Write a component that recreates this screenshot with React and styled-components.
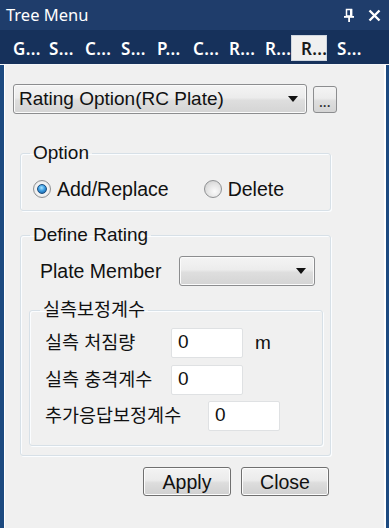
import React from 'react';
import styled, { createGlobalStyle } from 'styled-components';

const Global = createGlobalStyle`
  html, body { margin: 0; padding: 0; background: #f0f0f0; }
  #root { width: 389px; height: 528px; }
`;

const Window = styled.div`
  width: 389px;
  height: 528px;
  display: flex;
  flex-direction: column;
  overflow: hidden;
  font-family: "Liberation Sans", "Noto Sans CJK KR", sans-serif;
  color: #111;
`;

const TitleBar = styled.div`
  height: 30px;
  flex: none;
  background: #1f3d6b;
  display: flex;
  align-items: center;
  padding: 0 8px 0 6px;
  color: #fff;
`;

const Title = styled.div`
  flex: 1;
  font-family: "Noto Sans", sans-serif;
  font-size: 16.5px;
  line-height: 20px;
`;

const TitleIcons = styled.div`
  display: flex;
  align-items: center;
  gap: 13px;
`;

const TabBar = styled.div`
  height: 35px;
  flex: none;
  box-sizing: border-box;
  background: #16315b;
  display: flex;
  align-items: flex-end;
  padding: 0 0 3px 3px;
  border-bottom: 1px solid #f4f6f9;
`;

const Tab = styled.div`
  width: 36px;
  height: 26px;
  box-sizing: border-box;
  padding-left: 9px;
  display: flex;
  align-items: center;
  font-family: "Noto Sans", sans-serif;
  font-weight: 600;
  font-size: 17px;
  letter-spacing: 0.3px;
  white-space: nowrap;
  color: ${p => (p.$active ? '#1a1a1a' : '#ffffff')};
  background: ${p => (p.$active ? '#f0f0f0' : 'transparent')};
  border: 1px solid ${p => (p.$active ? '#cfd6df' : 'transparent')};
`;

const Content = styled.div`
  flex: 1;
  background: #f0f0f0;
  border-left: 4px solid #1d4a80;
  border-right: 3px solid #1d4a80;
  box-shadow: inset 1px 0 0 #ffffff, inset -2px 0 0 #ffffff;
  padding: 19px 0 0 9px;
  box-sizing: border-box;
`;

const ComboRow = styled.div`
  display: flex;
  align-items: center;
  gap: 6px;
`;

const Combo = styled.div`
  width: ${p => p.$w}px;
  height: 30px;
  box-sizing: border-box;
  border: 1px solid #8c8d8f;
  border-radius: 3px;
  background: linear-gradient(#f4f4f4 0%, #ececec 45%, #dedede 55%, #d4d4d4 100%);
  box-shadow: inset 0 0 0 1px #fbfbfb;
  display: flex;
  align-items: center;
  padding: 0 8px 0 5px;
  font-size: 19px;
  line-height: 22px;
`;

const ComboText = styled.span`
  flex: 1;
  white-space: nowrap;
`;

const DotsButton = styled.div`
  width: 24px;
  height: 27px;
  box-sizing: border-box;
  border: 1px solid #8c8d8f;
  border-radius: 3px;
  background: linear-gradient(#f4f4f4 0%, #ececec 45%, #dedede 55%, #d4d4d4 100%);
  display: flex;
  align-items: flex-end;
  justify-content: center;
  padding-bottom: 4px;
  font-size: 12px;
  line-height: 10px;
  letter-spacing: 0.5px;
  font-weight: bold;
  color: #333;
`;

const Group = styled.fieldset`
  margin: ${p => p.$m};
  padding: ${p => p.$p};
  border: 1px solid #d7e0e7;
  border-radius: 3px;
  box-shadow: inset 1px 1px 0 #fbfdff, 1px 1px 0 #fbfdff;
  min-width: 0;
`;

const Legend = styled.legend`
  margin-left: ${p => p.$ml}px;
  padding: 0 3px;
  font-size: ${p => p.$size || 19}px;
  line-height: 22px;
`;

const RadioRow = styled.div`
  display: flex;
  align-items: center;
  height: 22px;
`;

const RadioItem = styled.label`
  display: flex;
  align-items: center;
  gap: 6px;
  font-size: 19.5px;
  line-height: 22px;
  margin-right: ${p => p.$mr || 0}px;
`;

const RadioCircle = styled.span`
  width: 18px;
  height: 18px;
  border-radius: 50%;
  box-sizing: border-box;
  border: 1px solid #8f9193;
  background: ${p =>
    p.$checked
      ? 'radial-gradient(circle, #ffffff 0, #f2f2f2 55%, #d8d8d8 100%)'
      : 'radial-gradient(circle at 60% 65%, #fbfbfb 0, #e2e2e2 55%, #c6c6c6 100%)'};
  display: flex;
  align-items: center;
  justify-content: center;
  flex: none;
  &::after {
    content: '';
    display: ${p => (p.$checked ? 'block' : 'none')};
    width: 10px;
    height: 10px;
    box-sizing: border-box;
    border-radius: 50%;
    border: 1px solid #1b4d7e;
    background: radial-gradient(circle at 45% 35%, #a8e4ff 0, #3c9de2 45%, #0f5296 100%);
  }
`;

const FieldRow = styled.div`
  display: flex;
  align-items: center;
  padding-left: ${p => p.$pl}px;
  min-height: 30px;
`;

const Label = styled.span`
  width: ${p => p.$w}px;
  flex: none;
  font-size: ${p => p.$size || 19.5}px;
  line-height: 22px;
  white-space: nowrap;
`;

const Rows = styled.div`
  display: flex;
  flex-direction: column;
  gap: 6.5px;
`;

const Input = styled.div`
  width: 72px;
  height: 30px;
  box-sizing: border-box;
  background: #ffffff;
  border: 1px solid #dfe1e3;
  border-radius: 2px;
  padding: 3px 0 0 6px;
  font-size: 19px;
  line-height: 20px;
`;

const Unit = styled.span`
  margin-left: 12px;
  font-size: 19px;
  line-height: 22px;
`;

const ButtonRow = styled.div`
  display: flex;
  justify-content: flex-end;
  gap: 10px;
  margin: 11px 0 0 0;
  width: 316px;
`;

const Button = styled.div`
  width: 88px;
  height: 29px;
  box-sizing: border-box;
  border: 1px solid #707070;
  border-radius: 3px;
  background: linear-gradient(#f3f3f3 0%, #ebebeb 45%, #dddddd 55%, #d0d0d0 100%);
  box-shadow: inset 0 0 0 1px #fcfcfc;
  display: flex;
  align-items: center;
  justify-content: center;
  font-size: 19.5px;
  line-height: 22px;
`;

const Arrow = () => (
  <svg width="10" height="6" viewBox="0 0 10 6">
    <polygon points="0,0 10,0 5,6" fill="#111" />
  </svg>
);

const PinIcon = () => (
  <svg width="12" height="14" viewBox="0 0 12 14">
    <path d="M3.5 1.5 H8.5 V8 H3.5 Z" fill="none" stroke="#fff" strokeWidth="1.5" />
    <rect x="7" y="1" width="2.2" height="7.5" fill="#fff" />
    <rect x="1" y="8" width="10" height="1.8" fill="#fff" />
    <rect x="5.2" y="9" width="1.8" height="5" fill="#fff" />
  </svg>
);

const CloseIcon = () => (
  <svg width="13" height="13" viewBox="0 0 13 13">
    <path d="M1.5 1.5 L11.5 11.5 M11.5 1.5 L1.5 11.5" stroke="#fff" strokeWidth="2.4" />
  </svg>
);

const tabs = ['G...', 'S...', 'C...', 'S...', 'P...', 'C...', 'R...', 'R...', 'R...', 'S...'];

export default function App() {
  return (
    <>
      <Global />
      <Window>
        <TitleBar>
          <Title>Tree Menu</Title>
          <TitleIcons>
            <PinIcon />
            <CloseIcon />
          </TitleIcons>
        </TitleBar>
        <TabBar>
          {tabs.map((t, i) => (
            <Tab key={i} $active={i === 8}>{t}</Tab>
          ))}
        </TabBar>
        <Content>
          <ComboRow>
            <Combo $w={294}>
              <ComboText>Rating Option(RC Plate)</ComboText>
              <Arrow />
            </Combo>
            <DotsButton>...</DotsButton>
          </ComboRow>

          <Group $m="28px 0 0 7px" $p="14px 10px 10px 12px" style={{ width: 287 }}>
            <Legend $ml={-3}>Option</Legend>
            <RadioRow>
              <RadioItem $mr={35}>
                <RadioCircle $checked />
                Add/Replace
              </RadioItem>
              <RadioItem>
                <RadioCircle />
                Delete
              </RadioItem>
            </RadioRow>
          </Group>

          <Group $m="13px 0 0 7px" $p="10px 7px 9px 8px" style={{ width: 294 }}>
            <Legend $ml={1}>Define Rating</Legend>
            <FieldRow $pl={11}>
              <Label $w={139}>Plate Member</Label>
              <Combo $w={136}>
                <ComboText />
                <Arrow />
              </Combo>
            </FieldRow>
            <Group $m="13px 0 0 0" $p="7px 10px 14px 15px">
              <Legend $ml={-5} $size={18.5}>실측보정계수</Legend>
              <Rows>
                <FieldRow $pl={0}>
                  <Label $w={126} $size={18.5}>실측 처짐량</Label>
                  <Input>0</Input>
                  <Unit>m</Unit>
                </FieldRow>
                <FieldRow $pl={0}>
                  <Label $w={126} $size={18.5}>실측 충격계수</Label>
                  <Input>0</Input>
                </FieldRow>
                <FieldRow $pl={0}>
                  <Label $w={163} $size={18.5}>추가응답보정계수</Label>
                  <Input>0</Input>
                </FieldRow>
              </Rows>
            </Group>
          </Group>

          <ButtonRow>
            <Button>Apply</Button>
            <Button>Close</Button>
          </ButtonRow>
        </Content>
      </Window>
    </>
  );
}
